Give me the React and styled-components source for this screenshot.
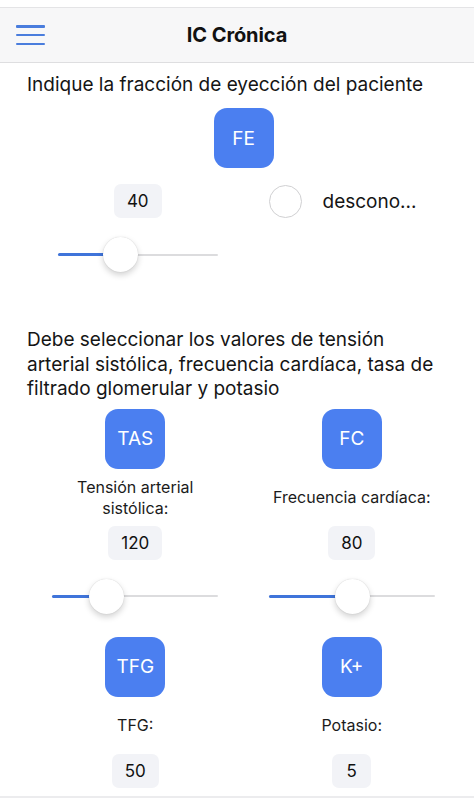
import React from "react";
import styled, { createGlobalStyle } from "styled-components";

const Global = createGlobalStyle`
  html, body { margin: 0; padding: 0; background: #fff; }
  body { font-family: Inter, "Noto Sans", "Liberation Sans", sans-serif; color: #151515; }
  * { box-sizing: border-box; }
`;

const BLUE = "#4b7ff0";

const Page = styled.div`
  height: 801px;
  display: flex;
  flex-direction: column;
  overflow: hidden;
`;

const StatusGap = styled.div`
  height: 8px;
  flex: none;
  border-bottom: 1px solid #e4e4e6;
`;

const Header = styled.header`
  flex: none;
  height: 55px;
  background: #f7f7f8;
  border-bottom: 1px solid #dedee0;
  display: grid;
  grid-template-columns: 1fr auto 1fr;
  align-items: center;
  padding: 0 16px;
`;

const Burger = styled.button`
  justify-self: start;
  width: 29px;
  height: 20px;
  border: 0;
  padding: 0;
  background: transparent;
  display: flex;
  flex-direction: column;
  justify-content: space-between;
  span {
    display: block;
    height: 2.5px;
    border-radius: 1px;
    background: #4a7ddd;
  }
`;

const Title = styled.h1`
  margin: 0;
  font-size: 20px;
  font-weight: 700;
  color: #111;
  letter-spacing: -0.1px;
`;

const Content = styled.main`
  flex: 1;
  overflow: hidden;
  padding: 10px 14px 0 27px;
  display: flex;
  flex-direction: column;
`;

const Prompt = styled.p`
  margin: ${(p) => p.$mt || 0}px 0 0;
  font-size: 19px;
  line-height: ${(p) => p.$lh || 24}px;
  color: #151515;
  max-width: ${(p) => p.$maxw || 440}px;
`;

const Tile = styled.button`
  width: 60px;
  height: 60px;
  border: 0;
  border-radius: 13px;
  background: ${BLUE};
  color: #fff;
  font-family: inherit;
  font-size: 19px;
  display: flex;
  align-items: center;
  justify-content: center;
  align-self: ${(p) => p.$self || "auto"};
  margin-top: ${(p) => p.$mt || 0}px;
`;

const FeRow = styled.div`
  margin-top: 16px;
  display: grid;
  grid-template-columns: 1fr 1fr;
`;

const Column = styled.div`
  display: flex;
  flex-direction: column;
  align-items: center;
  padding-left: ${(p) => p.$pl || 0}px;
`;

const ValueBox = styled.div`
  height: 34px;
  min-width: 39px;
  padding: 0 13px;
  border-radius: 7px;
  background: #f2f3f7;
  font-size: 17px;
  display: flex;
  align-items: center;
  justify-content: center;
  color: #111;
  margin-top: ${(p) => p.$mt || 0}px;
`;

const UnknownOption = styled.label`
  height: 34px;
  display: flex;
  align-items: center;
  gap: 21px;
  padding-left: 25px;
  font-size: 19px;
  color: #151515;
`;

const RadioCircle = styled.span`
  width: 33px;
  height: 33px;
  border-radius: 50%;
  border: 1.5px solid #d0d0d2;
  background: #fff;
`;

const SliderWrap = styled.div`
  position: relative;
  width: ${(p) => p.$w}px;
  height: 35px;
  margin-top: ${(p) => p.$mt || 0}px;
`;

const Track = styled.div`
  position: absolute;
  left: 0;
  right: 0;
  top: 16.5px;
  height: 2px;
  background: #dcdcde;
  border-radius: 1px;
`;

const Fill = styled.div`
  position: absolute;
  left: 0;
  top: 16px;
  height: 3px;
  background: #3f74da;
  border-radius: 1.5px;
`;

const Thumb = styled.div`
  position: absolute;
  top: 0;
  width: 35px;
  height: 35px;
  border-radius: 50%;
  background: #fff;
  box-shadow: 0 3px 6px rgba(0, 0, 0, 0.18), 0 0 1px rgba(0, 0, 0, 0.2);
`;

const Slider = ({ width, fraction, mt }) => {
  const travel = width - 35;
  const left = Math.round(travel * fraction);
  return (
    <SliderWrap $w={width} $mt={mt}>
      <Track />
      <Fill style={{ width: left + 17 }} />
      <Thumb style={{ left }} />
    </SliderWrap>
  );
};

const Grid = styled.div`
  margin-top: ${(p) => p.$mt || 0}px;
  display: grid;
  grid-template-columns: 1fr 1fr;
`;

const FieldLabel = styled.div`
  margin-top: 8px;
  min-height: 42px;
  display: flex;
  align-items: center;
  justify-content: center;
  text-align: center;
  font-size: 16px;
  line-height: 21px;
  color: #1b1b1b;
`;

const Footer = styled.div`
  flex: none;
  height: 5px;
  border-top: 2px solid #ececee;
`;

const Field = ({ tile, label, value, slider }) => (
  <Column>
    <Tile>{tile}</Tile>
    <FieldLabel>{label}</FieldLabel>
    <ValueBox $mt={7}>{value}</ValueBox>
    {slider !== undefined && <Slider width={166} fraction={slider} mt={19} />}
  </Column>
);

export default function App() {
  return (
    <Page>
      <Global />
      <StatusGap />
      <Header>
        <Burger aria-label="menu">
          <span />
          <span />
          <span />
        </Burger>
        <Title>IC Crónica</Title>
        <span />
      </Header>
      <Content>
        <Prompt>Indique la fracción de eyección del paciente</Prompt>
        <Tile $self="center" $mt={11}>FE</Tile>
        <FeRow>
          <Column $pl={5}>
            <ValueBox>40</ValueBox>
            <Slider width={160} fraction={0.36} mt={19} />
          </Column>
          <div>
            <UnknownOption>
              <RadioCircle />
              descono...
            </UnknownOption>
          </div>
        </FeRow>
        <Prompt $mt={56} $lh={24.5} $maxw={418}>
          Debe seleccionar los valores de tensión arterial sistólica, frecuencia
          cardíaca, tasa de filtrado glomerular y potasio
        </Prompt>
        <Grid $mt={7}>
          <Field
            tile="TAS"
            label={<span>Tensión arterial<br />sistólica:</span>}
            value="120"
            slider={0.28}
          />
          <Field tile="FC" label="Frecuencia cardíaca:" value="80" slider={0.5} />
        </Grid>
        <Grid $mt={23}>
          <Field tile="TFG" label="TFG:" value="50" />
          <Field tile="K+" label="Potasio:" value="5" />
        </Grid>
      </Content>
      <Footer />
    </Page>
  );
}
